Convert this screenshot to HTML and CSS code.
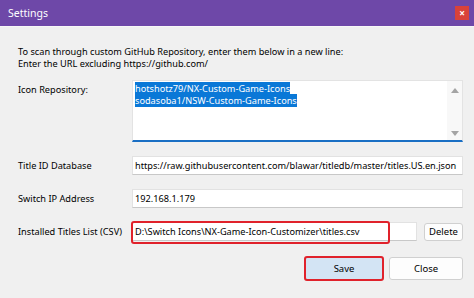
FILE: index.html
```html
<!DOCTYPE html>
<html>
<head>
<meta charset="utf-8">
<link rel="stylesheet" href="styles.css">
</head>
<body>
<div class="window">
  <div class="titlebar">
    <span class="title">Settings</span>
    <span class="close">&#215;</span>
  </div>
  <div class="content">
    <p class="intro">To scan through custom GitHub Repository, enter them below in a new line:<br>Enter the URL excluding https://github.com/</p>
    <div class="form">
      <div class="label label-top">Icon Repository:</div>
      <div class="textarea">
        <div class="ta-text">
          <span class="sel">hotshotz79/NX-Custom-Game-Icons</span><br>
          <span class="sel">sodasoba1/NSW-Custom-Game-Icons</span>
        </div>
        <div class="scrollbar">
          <span class="arrow up"></span>
          <span class="arrow down"></span>
        </div>
      </div>

      <div class="label">Title ID Database</div>
      <div class="input">https://raw.githubusercontent.com/blawar/titledb/master/titles.US.en.json</div>

      <div class="label">Switch IP Address</div>
      <div class="input">192.168.1.179</div>

      <div class="label">Installed Titles List (CSV)</div>
      <div class="csv-row">
        <div class="input csv-input">D:\Switch Icons\NX-Game-Icon-Customizer\titles.csv<span class="mark mark-csv"></span></div>
        <button class="btn btn-delete">Delete</button>
      </div>
    </div>
    <div class="buttons">
      <button class="btn btn-save">Save<span class="mark mark-save"></span></button>
      <button class="btn btn-close">Close</button>
    </div>
  </div>
</div>
</body>
</html>
```
FILE: styles.css
```css
* { box-sizing: border-box; }
html, body {
  margin: 0;
  padding: 0;
  width: 474px;
  height: 298px;
  overflow: hidden;
  background: #f0f0f0;
  font-family: "Noto Sans", "DejaVu Sans", sans-serif;
  font-size: 9.2px;
  color: #000;
}
.window {
  width: 474px;
  height: 298px;
  display: flex;
  flex-direction: column;
  background: #f0f0f0;
}
.titlebar {
  height: 27px;
  background: #6e48a8;
  border-bottom: 1px solid #f7f7f7;
  display: flex;
  align-items: center;
  justify-content: space-between;
  padding: 0 5px 0 8px;
  flex: none;
}
.title {
  color: #fff;
  font-size: 10.5px;
}
.close {
  width: 14px;
  height: 14px;
  background: #d9423a;
  color: #fff;
  font-size: 10px;
  line-height: 14px;
  text-align: center;
  font-weight: bold;
}
.content {
  padding: 19px 11px 0 18px;
  display: flex;
  flex-direction: column;
}
.intro {
  margin: 0;
  line-height: 11.5px;
}
.form {
  margin-top: 11px;
  display: grid;
  grid-template-columns: 114px 331px;
  row-gap: 14px;
  align-items: center;
}
.label-top { align-self: start; padding-top: 3px; }
.textarea {
  height: 62px;
  background: #fff;
  border: 1px solid #e3e3e3;
  border-bottom: 2px solid #1a6fc4;
  display: flex;
}
.ta-text {
  flex: 1;
  padding: 2px 2px;
  line-height: 11.5px;
}
.sel {
  background: #0a78d7;
  color: #fff;
}
.scrollbar {
  width: 15px;
  background: #f8f8f8;
  display: flex;
  flex-direction: column;
  justify-content: space-between;
  align-items: center;
  padding: 7px 0 4px;
}
.arrow {
  width: 0;
  height: 0;
  border-left: 4px solid transparent;
  border-right: 4px solid transparent;
}
.arrow.up { border-bottom: 5px solid #a4a4a4; }
.arrow.down { border-top: 5px solid #a4a4a4; }
.input {
  height: 19px;
  background: #fff;
  border: 1px solid #e2e2e2;
  border-bottom-color: #c8c8c8;
  padding: 0 2px;
  line-height: 17px;
  white-space: nowrap;
}
.csv-row {
  display: flex;
  align-items: center;
  gap: 7px;
}
.csv-input {
  width: 285px;
  position: relative;
}
.mark {
  position: absolute;
  border: 2px solid #e0222b;
  border-radius: 3px;
  pointer-events: none;
}
.mark-csv {
  left: -2px;
  top: -2px;
  width: 259px;
  height: 23px;
}
.btn {
  font-family: inherit;
  font-size: 9.5px;
  background: #fdfdfd;
  border: 1px solid #d0d0d0;
  border-radius: 3px;
  color: #000;
  padding: 0;
}
.btn-delete {
  width: 39px;
  height: 18px;
}
.buttons {
  margin-top: 16px;
  display: flex;
  justify-content: flex-end;
  gap: 6px;
}
.btn-save {
  width: 78px;
  height: 23px;
  background: #d3e4f4;
  position: relative;
}
.mark-save {
  left: -2px;
  top: -2px;
  right: -2px;
  bottom: -2px;
}
.btn-close {
  width: 74px;
  height: 23px;
}
```
